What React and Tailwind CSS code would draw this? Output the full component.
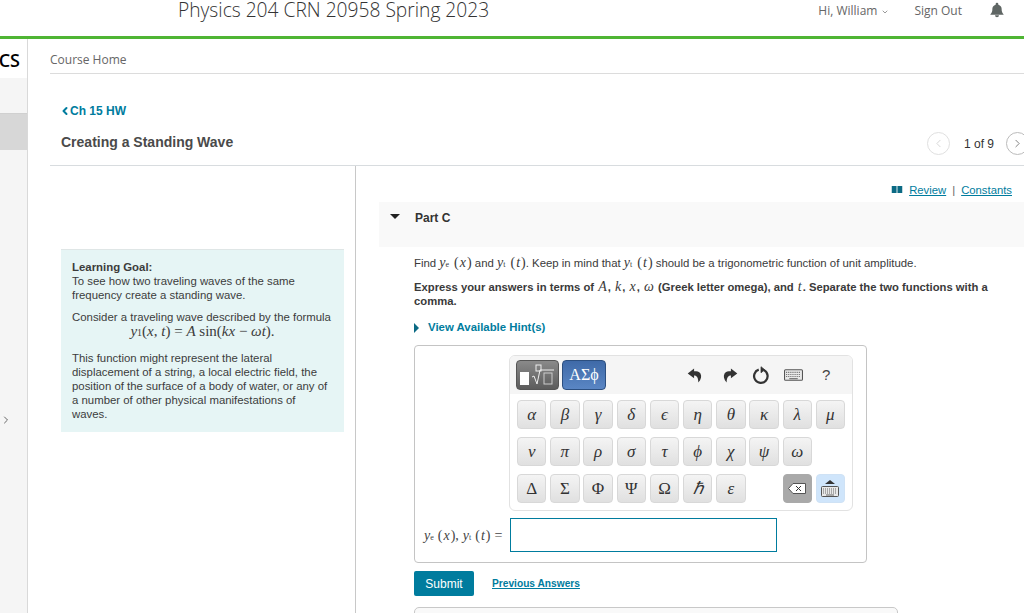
import React from "react";
import { ChevronLeft, ChevronRight, ChevronDown } from "lucide-react";

const Serif = ({ children, className = "" }) => (
  <span className={`px-[1px] font-['Liberation_Serif',serif] text-[14px] font-normal italic ${className}`}>{children}</span>
);

// y with a small subscript, then (arg)
const Fn = ({ sub, arg }) => (
  <span className="font-['Liberation_Serif',serif] text-[14px] font-normal">
    <i>y</i>
    <span className="text-[8px]">{sub}</span>
    <span className="ml-[5px]">(</span>
    <i className="px-[1px]">{arg}</i>)
  </span>
);

const rows = [
  ["α", "β", "γ", "δ", "ϵ", "η", "θ", "κ", "λ", "μ"],
  ["ν", "π", "ρ", "σ", "τ", "ϕ", "χ", "ψ", "ω"],
  ["Δ", "Σ", "Φ", "Ψ", "Ω", "ℏ", "ε"],
];

const Key = ({ children, upright }) => (
  <div
    className={`flex h-[29px] w-[29.4px] items-center justify-center rounded-[4px] border border-[#d8d8d8] bg-gradient-to-b from-[#f4f4f4] to-[#e0e0e0] font-['Liberation_Serif',serif] text-[17px] text-[#333] ${
      upright ? "" : "italic"
    }`}
  >
    {children}
  </div>
);

const KeyboardIcon = ({ className = "" }) => (
  <svg viewBox="0 0 18 11" className={className}>
    <rect x="0.5" y="0.5" width="17" height="10" rx="1" fill="#e8e8e8" stroke="#555" />
    <path d="M2 3h14M2 5h14M2 7h14" stroke="#666" strokeWidth="1" strokeDasharray="1 1" />
    <path d="M5 9h8" stroke="#666" strokeWidth="1" />
  </svg>
);

const Toolbar = () => (
  <div className="flex h-[38px] items-center rounded-t-[5px] bg-[#f5f5f5] pl-[6px]">
    <div className="flex h-[30px] w-[43px] items-center justify-center gap-[2px] rounded-[4px] border border-[#555] bg-gradient-to-b from-[#8a8a8a] to-[#5c5c5c]">
      <div className="mt-[7px] h-[13px] w-[9px] bg-white" />
      <svg viewBox="0 0 24 22" className="h-[22px] w-[24px]">
        <rect x="5" y="1" width="5" height="6" fill="none" stroke="#eee" />
        <path d="M1 13l2-1 3 8 3-14h14" fill="none" stroke="#eee" />
        <rect x="13" y="9" width="8" height="11" fill="none" stroke="#ccc" />
      </svg>
    </div>
    <div className="ml-[3px] flex h-[30px] w-[44px] items-center justify-center rounded-[4px] border border-[#2c4f80] bg-gradient-to-b from-[#3f6aa8] to-[#5a86c4] font-['Liberation_Serif',serif] text-[16px] text-white">
      ΑΣϕ
    </div>
    <svg viewBox="0 0 24 24" className="ml-[81px] h-[17px] w-[17px]" fill="#333">
      <path d="M10 2L1 9l9 7v-4c4 0 6 3 6 10 4-5 5-9 3-13-2-3-5-3-9-3z" />
    </svg>
    <svg viewBox="0 0 24 24" className="ml-[17px] h-[17px] w-[17px]" fill="#333">
      <path d="M14 2l9 7-9 7v-4c-4 0-6 3-6 10-4-5-5-9-3-13 2-3 5-3 9-3z" />
    </svg>
    <svg viewBox="0 0 24 24" className="ml-[14px] h-[18px] w-[18px]" fill="none" stroke="#333" strokeWidth="3">
      <path d="M16 5.5a9 9 0 1 1-7-.6" />
      <path d="M12 1l5 4-5 4z" fill="#333" strokeWidth="1" />
    </svg>
    <KeyboardIcon className="ml-[14px] h-[12px] w-[19px]" />
    <span className="ml-[19px] font-['Liberation_Sans',sans-serif] text-[15px] text-[#444]">?</span>
  </div>
);

const Palette = () => (
  <div className="ml-[94px] h-[156px] w-[344px] rounded-[6px] border border-[#e2e2e2] bg-white">
    <Toolbar />
    <div className="flex flex-col gap-[8px] pl-[7px] pt-[6px]">
      {rows.map((row, i) => (
        <div key={i} className="flex gap-[3.8px]">
          {row.map((k) => (
            <Key key={k} upright={i === 2 && k !== "ℏ" && k !== "ε"}>
              {k}
            </Key>
          ))}
          {i === 2 && (
            <>
              <div className="ml-[33.2px] flex h-[29px] w-[29.4px] items-center justify-center rounded-[4px] border border-[#aaa] bg-[#a9a9a9]">
                <svg viewBox="0 0 18 11" className="h-[11px] w-[18px]">
                  <path d="M5 .5h12.5v10H5L.5 5.5z" fill="#fff" stroke="#555" />
                  <path d="M8 3l5 5M13 3l-5 5" stroke="#333" />
                </svg>
              </div>
              <div className="flex h-[29px] w-[29.4px] flex-col items-center justify-center gap-[2px] rounded-[4px] border border-[#cfe2f5] bg-[#cfe5fb]">
                <div className="h-0 w-0 border-x-[5px] border-b-[4px] border-x-transparent border-b-[#333]" />
                <KeyboardIcon className="h-[11px] w-[18px]" />
              </div>
            </>
          )}
        </div>
      ))}
    </div>
  </div>
);

const AnswerBox = () => (
  <div className="mt-[10px] h-[218px] w-[453px] rounded-[4px] border border-[#c4c4c4] pt-[9px]">
    <Palette />
    <div className="mt-[7px] flex items-center pl-[9px]">
      <span className="w-[86px] whitespace-nowrap font-['Liberation_Serif',serif] text-[14px] text-[#444]">
        <i>y</i>
        <span className="text-[8px]">e</span>
        <span className="ml-[4px]">(</span>
        <i className="px-[1px]">x</i>),
        <i className="ml-[4px]">y</i>
        <span className="text-[8px]">t</span>
        <span className="ml-[4px]">(</span>
        <i className="px-[1px]">t</i>)<span className="ml-[4px]">=</span>
      </span>
      <div className="h-[34px] w-[267px] border border-[#007c9e] bg-white" />
    </div>
  </div>
);

const Sidebar = () => (
  <aside className="flex w-[28px] shrink-0 flex-col border-r border-[#d9d9d9] bg-[#f5f5f5]">
    <div className="flex h-[39px] items-center justify-end overflow-hidden bg-white pr-[7px] pt-[3px] font-['Open_Sans',sans-serif] text-[18px] font-semibold text-black">
      CS
    </div>
    <div className="h-[36px] border-b border-[#d0d0d0]" />
    <div className="h-[36px] bg-[#d7d7d7]" />
    <div className="flex flex-1 items-start pl-[0px] pt-[264px] text-[#666]">
      <ChevronRight size={12} strokeWidth={2} />
    </div>
  </aside>
);

const LearningGoal = () => (
  <div className="w-[283px] border-t border-[#dfe6e6] bg-[#e6f5f5] px-[11px] pb-[11px] pt-[10px] font-['Liberation_Sans',sans-serif] text-[11.4px] leading-[14px] text-[#3c3c3c]">
    <div className="font-bold">Learning Goal:</div>
    <div>To see how two traveling waves of the same frequency create a standing wave.</div>
    <div className="mt-[8px] whitespace-nowrap">Consider a traveling wave described by the formula</div>
    <div className="text-center font-['Liberation_Serif',serif] text-[15px] leading-[15px]">
      <i>y</i>
      <span className="text-[10px]">1</span>(<i>x</i>, <i>t</i>) = <i>A</i> sin(<i>kx</i> − <i>ωt</i>).
    </div>
    <div className="mt-[11px]">
      This function might represent the lateral displacement of a string, a local electric field, the position of
      the surface of a body of water, or any of a number of other physical manifestations of waves.
    </div>
  </div>
);

const Question = () => (
  <section className="min-w-0 flex-1 pl-[23px]">
    <div className="flex h-[36px] items-start justify-end gap-[6px] pr-[12px] pt-[18px] text-[11.3px] leading-[12px] text-[#007c9e]">
      <svg viewBox="0 0 12 8" className="mt-[2px] h-[7px] w-[12px]" fill="#0b6a84">
        <rect width="5.5" height="8" />
        <rect x="6.5" width="5.5" height="8" />
      </svg>
      <span className="underline">Review</span>
      <span className="text-[#666]">|</span>
      <span className="underline">Constants</span>
    </div>
    <div className="flex h-[45px] items-start bg-[#f9f9f9] pl-[11px] pt-[7px] text-[12px] font-bold text-[#333]">
      <div className="mt-[5px] h-0 w-0 border-x-[5px] border-t-[5px] border-x-transparent border-t-[#222]" />
      <span className="ml-[15px]">Part C</span>
    </div>
    <div className="pl-[35px] text-[#3a3a3a]">
      <p className="mt-[9px] whitespace-nowrap text-[11.4px] leading-[14px]">
        Find <Fn sub="e" arg="x" /> and <Fn sub="t" arg="t" />. Keep in mind that <Fn sub="t" arg="t" /> should be a
        trigonometric function of unit amplitude.
      </p>
      <p className="mt-[8px] w-[590px] text-[11.26px] font-bold leading-[14px]">
        Express your answers in terms of <Serif>A</Serif>, <Serif>k</Serif>, <Serif>x</Serif>, <Serif>ω</Serif> (Greek
        letter omega), and <Serif>t</Serif>. Separate the two functions with a comma.
      </p>
      <div className="mt-[13px] flex h-[14px] items-center text-[11.4px] font-bold text-[#007c9e]">
        <div className="h-0 w-0 border-y-[5px] border-l-[5px] border-y-transparent border-l-[#0b6a84]" />
        <span className="ml-[9px]">View Available Hint(s)</span>
      </div>
      <AnswerBox />
      <div className="mt-[8px] flex items-center">
        <div className="flex h-[25px] w-[60px] items-center justify-center rounded-[2px] bg-[#007c9e] text-[12px] text-white">
          Submit
        </div>
        <span className="ml-[18px] text-[10.2px] font-bold text-[#007c9e] underline">Previous Answers</span>
      </div>
      <div className="mt-[11px] h-[10px] w-[484px] rounded-t-[5px] border border-[#c8c8c8] bg-[#f9f9f9]" />
    </div>
  </section>
);

export default function App() {
  return (
    <div className="flex h-[613px] w-[1024px] flex-col overflow-hidden bg-white font-['Liberation_Sans',sans-serif]">
      <header className="flex h-[39px] shrink-0 items-start border-b-[3px] border-[#4fb534] font-['Open_Sans',sans-serif] text-[#666]">
        <h1 className="ml-[178px] whitespace-nowrap text-[19.2px] font-light leading-[20px] text-[#333]">
          Physics 204 CRN 20958 Spring 2023
        </h1>
        <div className="ml-auto mt-[4px] flex items-center text-[12px] leading-[14px]">
          <span>Hi, William</span>
          <ChevronDown size={8} className="ml-[4px] mt-[2px]" />
          <span className="ml-[25px]">Sign Out</span>
          <svg viewBox="0 0 24 24" className="-mt-[2px] ml-[27px] mr-[19px] h-[16px] w-[16px]" fill="#5f6664">
            <path d="M12 1a2 2 0 0 0-2 2v1a7 7 0 0 0-5 7c0 5-2 6-3 8h20c-1-2-3-3-3-8a7 7 0 0 0-5-7V3a2 2 0 0 0-2-2zM9 20a3 3 0 0 0 6 0z" />
          </svg>
        </div>
      </header>
      <div className="flex min-h-0 flex-1">
        <Sidebar />
        <main className="flex min-w-0 flex-1 flex-col pl-[22px]">
          <div className="flex h-[35px] shrink-0 items-center border-b border-[#dcdcdc] font-['Open_Sans',sans-serif] text-[12px] text-[#666]">
            <span className="mt-[8px]">Course Home</span>
          </div>
          <div className="flex h-[92px] shrink-0 flex-col border-b border-[#d8dcdf] pl-[11px]">
            <div className="mt-[30px] flex h-[14px] items-center text-[12px] font-bold leading-none text-[#007c9e]">
              <ChevronLeft size={12} strokeWidth={4} className="-ml-[2px] -mr-[1px]" />
              Ch 15 HW
            </div>
            <div className="mt-[11px] flex items-center text-[14px] font-bold leading-[20px] text-[#4a4a4a]">
              Creating a Standing Wave
              <div className="ml-auto mt-[3px] flex items-center text-[12px] font-normal text-[#333]">
                <div className="flex h-[23px] w-[23px] items-center justify-center rounded-full border border-[#e0e0e0] text-[#ccc]">
                  <ChevronLeft size={13} strokeWidth={1.5} />
                </div>
                <span className="ml-[14px]">1 of 9</span>
                <div className="-mr-[5px] ml-[12px] flex h-[23px] w-[23px] items-center justify-center rounded-full border border-[#bbb] text-[#666]">
                  <ChevronRight size={13} strokeWidth={1.5} />
                </div>
              </div>
            </div>
          </div>
          <div className="flex min-h-0 flex-1">
            <div className="w-[306px] shrink-0 border-r border-[#c8c8c8] pl-[11px] pt-[83px]">
              <LearningGoal />
            </div>
            <Question />
          </div>
        </main>
      </div>
    </div>
  );
}
